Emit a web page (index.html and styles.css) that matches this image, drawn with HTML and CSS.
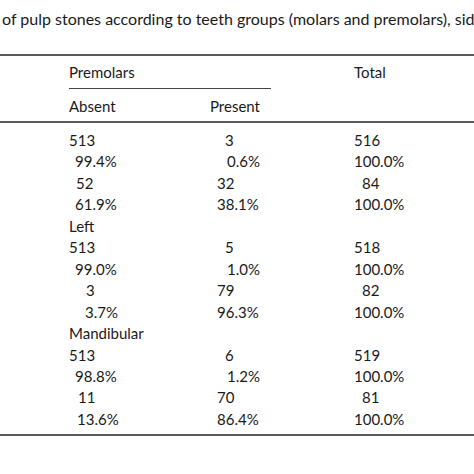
FILE: index.html
```html
<!DOCTYPE html>
<html>
<head>
<meta charset="utf-8">
<link rel="stylesheet" href="styles.css">
</head>
<body>
<div class="title">of pulp stones according to teeth groups (molars and premolars), side</div>
<div class="table">
  <div class="head1">
    <div class="premolars">Premolars</div>
    <div class="total">Total</div>
  </div>
  <div class="head2">
    <div class="c1">Absent</div>
    <div class="c2">Present</div>
  </div>
  <div class="body">
    <div class="row"><span class="c1">513</span><span class="c2 in8">3</span><span class="c3">516</span></div>
    <div class="row"><span class="c1 in6">99.4%</span><span class="c2 in10">0.6%</span><span class="c3">100.0%</span></div>
    <div class="row"><span class="c1 in7">52</span><span class="c2">32</span><span class="c3 in8">84</span></div>
    <div class="row"><span class="c1 in6">61.9%</span><span class="c2">38.1%</span><span class="c3">100.0%</span></div>
    <div class="row"><span class="c1">Left</span><span class="c2"></span><span class="c3"></span></div>
    <div class="row"><span class="c1">513</span><span class="c2 in8">5</span><span class="c3">518</span></div>
    <div class="row"><span class="c1 in6">99.0%</span><span class="c2 in10">1.0%</span><span class="c3">100.0%</span></div>
    <div class="row"><span class="c1 in17">3</span><span class="c2">79</span><span class="c3 in8">82</span></div>
    <div class="row"><span class="c1 in16">3.7%</span><span class="c2">96.3%</span><span class="c3">100.0%</span></div>
    <div class="row"><span class="c1">Mandibular</span><span class="c2"></span><span class="c3"></span></div>
    <div class="row"><span class="c1">513</span><span class="c2 in8">6</span><span class="c3">519</span></div>
    <div class="row"><span class="c1 in6">98.8%</span><span class="c2 in10">1.2%</span><span class="c3">100.0%</span></div>
    <div class="row"><span class="c1 in9">11</span><span class="c2">70</span><span class="c3 in8">81</span></div>
    <div class="row"><span class="c1 in8">13.6%</span><span class="c2">86.4%</span><span class="c3">100.0%</span></div>
  </div>
</div>
</body>
</html>
```
FILE: styles.css
```css
html, body {
  margin: 0;
  padding: 0;
  background: #fff;
}
body {
  width: 474px;
  height: 474px;
  overflow: hidden;
  font-family: "Lato", "Open Sans", sans-serif;
  font-size: 15px;
  color: #1a1a1a;
}
.title {
  padding: 8px 0 0 2px;
  height: 37px;
  line-height: 22px;
  font-size: 16px;
  white-space: nowrap;
}
.table {
  border-top: 2px solid #5a5a5a;
  border-bottom: 2px solid #5a5a5a;
  margin-top: 9px;
}
.head1 {
  display: flex;
  height: 33px;
  align-items: center;
}
.premolars {
  margin-left: 69px;
  width: 202px;
  height: 33px;
  line-height: 33px;
  border-bottom: 1px solid #444;
  box-sizing: border-box;
}
.total {
  margin-left: 83px;
  line-height: 33px;
}
.head2 {
  display: grid;
  grid-template-columns: 69px 141px 1fr;
  height: 32px;
  line-height: 34px;
  border-bottom: 2px solid #5a5a5a;
}
.head2 .c1 { grid-column: 2; }
.head2 .c2 { grid-column: 3; }
.body {
  padding: 7px 0 4px;
}
.row {
  display: grid;
  grid-template-columns: 69px 148px 137px 1fr;
  height: 21.46px;
  line-height: 21.46px;
}
.row .c1 { grid-column: 2; }
.row .c2 { grid-column: 3; }
.row .c3 { grid-column: 4; }
.in6 { padding-left: 6px; }
.in7 { padding-left: 7px; }
.in8 { padding-left: 8px; }
.in9 { padding-left: 9px; }
.in10 { padding-left: 10px; }
.in16 { padding-left: 16px; }
.in17 { padding-left: 17px; }
```
